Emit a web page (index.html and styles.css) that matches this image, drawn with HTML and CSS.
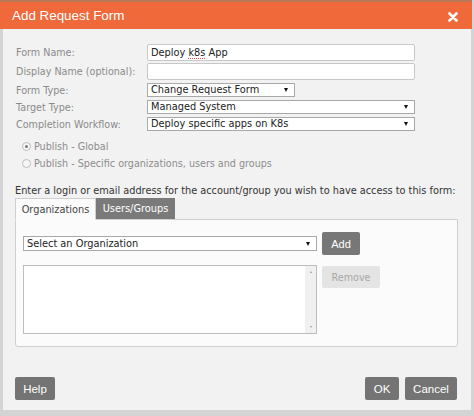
FILE: index.html
```html
<!DOCTYPE html>
<html>
<head>
<meta charset="utf-8">
<link rel="stylesheet" href="styles.css">
</head>
<body>
<div class="dialog">
  <div class="titlebar">
    <span class="title">Add Request Form</span>
    <svg class="close" width="10" height="10" viewBox="0 0 10 10"><path d="M1.5 1.5 L8.5 8.5 M8.5 1.5 L1.5 8.5" stroke="#fff" stroke-width="2.6" stroke-linecap="round"/></svg>
  </div>
  <div class="body">
    <div class="fields">
      <div class="row">
        <span class="label">Form Name:</span>
        <div class="input">Deploy <span class="spell">k8s</span> App</div>
      </div>
      <div class="row">
        <span class="label">Display Name (optional):</span>
        <div class="input"></div>
      </div>
      <div class="row">
        <span class="label">Form Type:</span>
        <div class="select short"><span>Change Request Form</span><i class="arrow"></i></div>
      </div>
      <div class="row">
        <span class="label">Target Type:</span>
        <div class="select"><span>Managed System</span><i class="arrow"></i></div>
      </div>
      <div class="row">
        <span class="label">Completion Workflow:</span>
        <div class="select"><span>Deploy specific apps on K8s</span><i class="arrow"></i></div>
      </div>
    </div>
    <div class="radios">
      <div class="radio-row"><span class="radio checked"></span><span>Publish - Global</span></div>
      <div class="radio-row"><span class="radio"></span><span>Publish - Specific organizations, users and groups</span></div>
    </div>
    <p class="hint">Enter a login or email address for the account/group you wish to have access to this form:</p>
    <div class="tabs">
      <div class="tab active">Organizations</div>
      <div class="tab">Users/Groups</div>
    </div>
    <div class="panel">
      <div class="prow">
        <div class="select org"><span>Select an Organization</span><i class="arrow"></i></div>
        <div class="btn">Add</div>
      </div>
      <div class="prow top">
        <div class="listbox">
          <div class="scroll"><i class="sarrow up"></i><i class="sarrow down"></i></div>
        </div>
        <div class="btn disabled">Remove</div>
      </div>
    </div>
    <div class="footer">
      <div class="btn big help">Help</div>
      <div class="spacer"></div>
      <div class="btn big ok">OK</div>
      <div class="btn big cancel">Cancel</div>
    </div>
  </div>
</div>
</body>
</html>
```
FILE: styles.css
```css
html, body {
  margin: 0;
  padding: 0;
}
body {
  width: 474px;
  height: 416px;
  background: #d4d4d4;
  font-family: "DejaVu Sans", Verdana, sans-serif;
  overflow: hidden;
}
.dialog {
  width: 472px;
  border-top: 2px solid #b9785a;
}
.titlebar {
  height: 27px;
  background: #f0693b;
  display: flex;
  align-items: center;
  padding: 0 14px 0 12px;
}
.title {
  font-family: "Liberation Sans", Arial, sans-serif;
  font-size: 13.4px;
  color: #fff;
  flex: 1;
  margin-top: -1px;
}
.close {
  display: block;
  margin-top: 3px;
}
.body {
  margin: 0 1px 0 3px;
  background: #f2f2f2;
  height: 381px;
  padding: 15px 12px 0 12px;
  box-sizing: border-box;
}
.fields {
  display: flex;
  flex-direction: column;
}
.row {
  display: flex;
  align-items: center;
  margin-bottom: 2px;
}
.label {
  width: 131px;
  padding-left: 1px;
  font-size: 9.6px;
  color: #8a8a8a;
}
.input {
  width: 268px;
  height: 17px;
  box-sizing: border-box;
  border: 1px solid #c8c8c8;
  border-radius: 2px;
  background: #fff;
  font-size: 9.8px;
  color: #222;
  padding: 0 3px;
  line-height: 15px;
}
.spell {
  text-decoration: underline dotted #e05050;
  text-decoration-thickness: 1px;
  text-underline-offset: 2px;
}
.select {
  width: 268px;
  height: 14px;
  box-sizing: border-box;
  border: 1px solid #a9a9a9;
  background: #fff;
  font-size: 9.8px;
  color: #222;
  padding: 0 6px 0 3px;
  display: flex;
  align-items: center;
  justify-content: space-between;
  line-height: 12px;
}
.select.short {
  width: 148px;
}
.arrow {
  width: 0;
  height: 0;
  border-left: 2px solid transparent;
  border-right: 2px solid transparent;
  border-top: 4px solid #111;
}
.row:nth-child(2), .row:nth-child(3), .row:nth-child(4) {
  margin-bottom: 3px;
}
.radios {
  margin-top: 5px;
  padding-left: 7px;
}
.radio-row {
  display: flex;
  align-items: center;
  height: 17px;
  font-size: 9.6px;
  color: #8c8c8c;
}
.radio {
  width: 7px;
  height: 7px;
  border-radius: 50%;
  border: 1px solid #bdbdbd;
  background: #f6f6f6;
  margin-right: 3px;
  position: relative;
}
.radio.checked::after {
  content: "";
  position: absolute;
  left: 2px;
  top: 2px;
  width: 3px;
  height: 3px;
  border-radius: 50%;
  background: #777;
}
.hint {
  margin: 13px 0 0 0;
  font-size: 9.75px;
  color: #333;
  white-space: nowrap;
  line-height: 12px;
}
.tabs {
  display: flex;
  margin-top: 1px;
  height: 21px;
  align-items: flex-end;
  position: relative;
  z-index: 1;
}
.tab {
  font-size: 9.8px;
  box-sizing: border-box;
  display: flex;
  align-items: center;
  justify-content: center;
  height: 22px;
  margin-bottom: -1px;
}
.tab.active {
  width: 81px;
  background: #fbfbfb;
  color: #444;
  border: 1px solid #cfcfcf;
  border-bottom: 1px solid #fbfbfb;
}
.tab:not(.active) {
  width: 79px;
  background: #7a7a7a;
  color: #fff;
  border-bottom: 1px solid #cfcfcf;
}
.panel {
  width: 443px;
  height: 128px;
  box-sizing: border-box;
  border: 1px solid #cfcfcf;
  border-radius: 0 0 3px 3px;
  background: #fbfbfb;
  padding: 12px 7px 0 7px;
}
.prow {
  display: flex;
  align-items: center;
  margin-bottom: 10px;
}
.prow.top {
  align-items: flex-start;
}
.select.org {
  width: 294px;
  height: 15px;
}
.btn {
  margin-left: 5px;
  height: 23px;
  padding: 0 10px;
  background: #777;
  color: #fff;
  border-radius: 2px;
  font-family: "Liberation Sans", Arial, sans-serif;
  font-size: 11px;
  display: flex;
  align-items: center;
  justify-content: center;
  box-sizing: border-box;
}
.prow .btn {
  width: 38px;
}
.btn.disabled {
  width: 58px !important;
  height: 22px;
  margin-top: 1px;
  background: #e4e4e4;
  color: #a8a8a8;
  font-family: "DejaVu Sans", Verdana, sans-serif;
  font-size: 9.6px;
}
.listbox {
  width: 294px;
  height: 69px;
  box-sizing: border-box;
  border: 1px solid #bdbdbd;
  background: #fff;
  display: flex;
  justify-content: flex-end;
}
.scroll {
  width: 11px;
  background: #f0f0f0;
  display: flex;
  flex-direction: column;
  justify-content: space-between;
  align-items: center;
  padding: 5px 0;
}
.sarrow {
  width: 0;
  height: 0;
  border-left: 1.5px solid transparent;
  border-right: 1.5px solid transparent;
}
.sarrow.up {
  border-bottom: 2px solid #999;
}
.sarrow.down {
  border-top: 2px solid #999;
}
.footer {
  display: flex;
  margin-top: 30px;
  width: 442px;
}
.spacer {
  flex: 1;
}
.btn.big {
  margin-left: 0;
  height: 23px;
  background: #747474;
  font-size: 11.5px;
}
.btn.help { width: 40px; }
.btn.ok { width: 34px; margin-right: 6px; }
.btn.cancel { width: 52px; }
```
